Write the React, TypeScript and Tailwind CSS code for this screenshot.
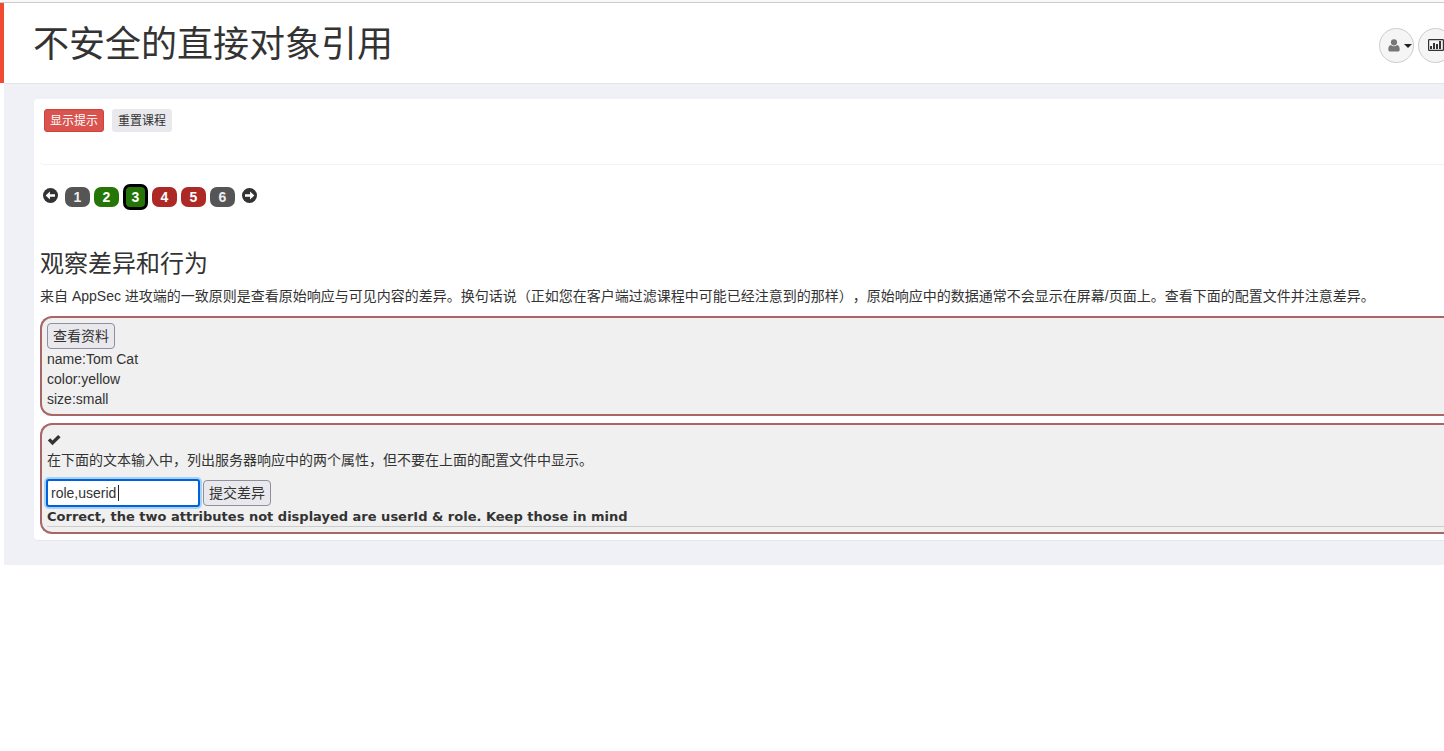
import { useState } from 'react'

const pages = [
  { n: 1, color: 'bg-[#555555] text-[#eeeeee]' },
  { n: 2, color: 'bg-[#257606] text-white' },
  { n: 3, color: 'bg-[#257606] text-white', current: true },
  { n: 4, color: 'bg-[#ac2925] text-white' },
  { n: 5, color: 'bg-[#ac2925] text-white' },
  { n: 6, color: 'bg-[#555555] text-[#eeeeee]' },
]

const profile = ['name:Tom Cat', 'color:yellow', 'size:small']

const lessonButton =
  'h-[26px] rounded-[4px] border border-[#8f8f9d] bg-[#e9e9ed] px-[5px] leading-5'

function CircleArrow({ flip = false }: { flip?: boolean }) {
  return (
    <svg viewBox="0 0 16 16" className={flip ? 'block size-[15px] -scale-x-100' : 'block size-[15px]'} aria-hidden="true">
      <circle cx="8" cy="8" r="8" fill="#333" />
      <path d="M2.8 8 7.4 3.8V6.6H12.8V9.4H7.4V12.2z" fill="#fff" />
    </svg>
  )
}

function UserIcon() {
  return (
    <svg viewBox="0 0 12 13" className="block h-[13px] w-3" fill="#777" aria-hidden="true">
      <circle cx="6" cy="3.3" r="3.1" />
      <path d="M3 6.1C1 6.3.3 8.2.3 10.4c0 1.4.8 2.1 2 2.1h7.4c1.2 0 2-.7 2-2.1 0-2.2-.7-4.1-2.7-4.3C8.2 6.9 7.2 7.3 6 7.3S3.8 6.9 3 6.1z" />
    </svg>
  )
}

function ChartIcon() {
  return (
    <svg viewBox="0 0 16 12" className="block h-3 w-4" aria-hidden="true">
      <rect x=".6" y=".6" width="14.8" height="10.8" rx=".6" fill="none" stroke="#333" strokeWidth="1.2" />
      <path d="M2 7h2v3H2zM5 4h2v6H5zM8 5h2v5H8zM11 2h2v8h-2z" fill="#333" />
    </svg>
  )
}

function Header() {
  return (
    <header className="flex h-20 border-l-4 border-[#f04b32] bg-white">
      <div className="flex flex-1 items-center justify-between overflow-hidden pl-[29px]">
        <h1 className="pt-1 text-4xl leading-10">不安全的直接对象引用</h1>
        <div className="-mr-[9px] flex gap-1 pt-1">
          <button
            aria-label="User"
            className="flex size-[35px] items-center justify-end gap-1 rounded-full border border-[#cccccc] bg-[#f5f5f5] pr-px"
          >
            <UserIcon />
            <svg viewBox="0 0 8 4" className="mt-0.5 block h-1 w-2" aria-hidden="true">
              <path d="M0 0h8L4 4z" fill="#222" />
            </svg>
          </button>
          <button
            aria-label="Report card"
            className="flex size-[35px] items-center justify-center rounded-full border border-[#cccccc] bg-[#f5f5f5]"
          >
            <ChartIcon />
          </button>
        </div>
      </div>
    </header>
  )
}

function Pager() {
  return (
    <nav className="mt-[19px] flex h-[26px] items-center gap-1 pl-[3px]">
      <a href="#prev" aria-label="Previous" className="mr-[3px] pb-[3px]">
        <CircleArrow />
      </a>
      {pages.map((p) => (
        <a
          key={p.n}
          href={`#${p.n}`}
          className={`flex w-[25px] items-center justify-center rounded-[7px] text-sm font-bold ${p.color} ${
            p.current ? 'h-[26px] border-[3px] border-black' : 'h-5'
          }`}
        >
          {p.n}
        </a>
      ))}
      <a href="#next" aria-label="Next" className="ml-[3px] pb-[3px]">
        <CircleArrow flip />
      </a>
    </nav>
  )
}

export default function App() {
  const [answer, setAnswer] = useState('role,userid')

  return (
    <div className="overflow-hidden bg-white font-['Liberation_Sans','Noto_Sans_CJK_SC',sans-serif] text-sm leading-5 text-[#333333] [text-spacing-trim:space-all]">
      <div className="h-[3px] border-b border-[#cccccc] bg-[#f9f9fa]" />
      <Header />

      <main className="ml-1 border-t border-[#e4e4e8] bg-[#f0f1f7] pt-[15px] pb-6 pl-[30px]">
        <section className="rounded-l-[4px] border-b border-[#e6e6ea] bg-white pb-1.5 pl-1.5">
          <div className="flex gap-2 pt-2.5 pl-1 text-xs">
            <button className="h-[23px] rounded-[3px] border border-[#d43f3a] bg-[#d9534f] px-[5px] text-white">
              显示提示
            </button>
            <button className="h-[23px] rounded-[3px] bg-[#e9e9ed] px-1.5">重置课程</button>
          </div>
          <div className="h-[33px] rounded-bl-[4px] border-b border-[#f2f2f2]" />

          <Pager />

          <h2 className="mt-10 text-2xl leading-7">观察差异和行为</h2>
          <p className="mt-2 whitespace-nowrap">
            来自 AppSec 进攻端的一致原则是查看原始响应与可见内容的差异。换句话说（正如您在客户端过滤课程中可能已经注意到的那样），原始响应中的数据通常不会显示在屏幕/页面上。查看下面的配置文件并注意差异。
          </p>

          <div className="mt-2.5 rounded-l-[12px] border-2 border-r-0 border-[#aa6666] bg-[#f0f0f0] py-[5px] pl-[5px]">
            <button className={lessonButton}>查看资料</button>
            {profile.map((line) => (
              <div key={line}>{line}</div>
            ))}
          </div>

          <div className="mt-[7px] rounded-l-[12px] border-2 border-r-0 border-[#aa6666] bg-[#f0f0f0] py-[5px] pl-[5px]">
            <div className="flex h-5 items-center">
              <svg viewBox="0 0 14 12" className="block h-3 w-3.5" aria-hidden="true">
                <path d="M.8 6.6 3.2 4.2l2.3 2.3L11.1 1l2.5 2.3-8.1 8z" fill="#333" />
              </svg>
            </div>
            <label htmlFor="answer" className="block">
              在下面的文本输入中，列出服务器响应中的两个属性，但不要在上面的配置文件中显示。
            </label>
            <div className="mt-[9px] flex items-center gap-[3px]">
              <div className="relative -ml-px">
                <input
                  id="answer"
                  type="text"
                  value={answer}
                  onChange={(e) => setAnswer(e.target.value)}
                  className="block h-7 w-[154px] rounded-[3px] border-2 border-[#0060df] bg-white px-[3px] caret-transparent shadow-[0_0_0_2px_#a5d3f0] outline-none"
                />
                <span className="absolute top-1.5 left-[72px] h-4 w-px bg-[#222222]" />
              </div>
              <button className={lessonButton}>提交差异</button>
            </div>
            <div className="border-b border-[#cccccc] font-['DejaVu_Sans',sans-serif] text-[13px] leading-[19px] font-bold">
              Correct, the two attributes not displayed are userId &amp; role. Keep those in mind
            </div>
          </div>
        </section>
      </main>
    </div>
  )
}
